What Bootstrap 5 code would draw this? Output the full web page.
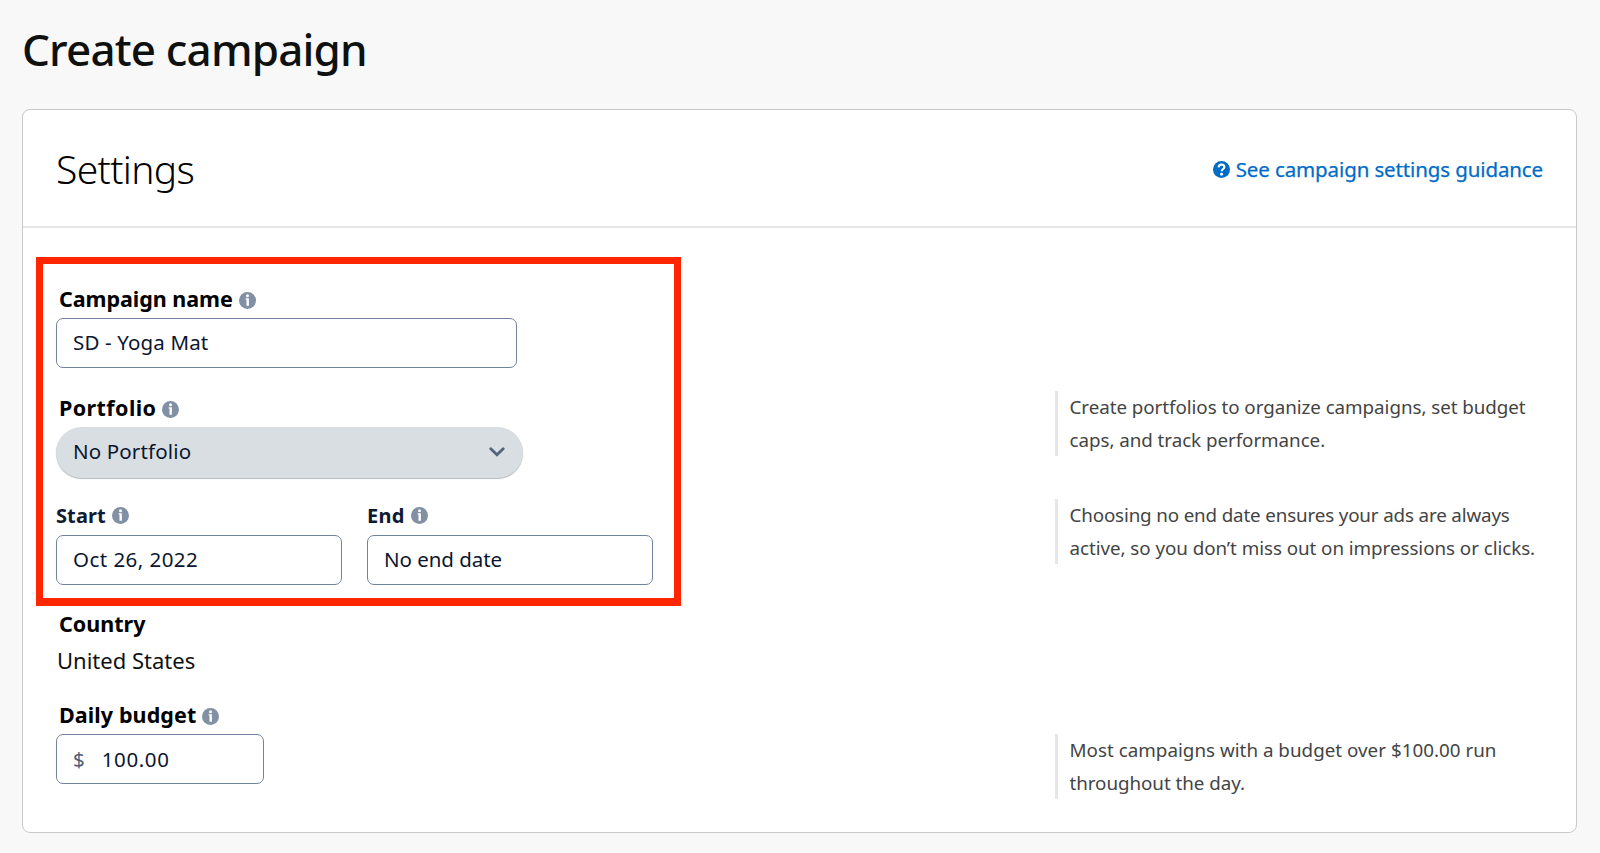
<!DOCTYPE html>
<html lang="en">
<head>
<meta charset="utf-8">
<meta name="viewport" content="width=device-width, initial-scale=1">
<title>Create campaign</title>
<link href="https://cdn.jsdelivr.net/npm/bootstrap@5.3.0/dist/css/bootstrap.min.css" rel="stylesheet">
<style>
body{font-family:"Noto Sans","Open Sans",sans-serif;background:#f8f8f8;color:#0f1111;height:853px;overflow:hidden}
.page{padding:0 23px 0 22px}
.page-title{font-size:44px;font-weight:500;line-height:60px;padding-top:19px;height:109px;letter-spacing:-.83px}
.panel{height:724px;border:1.4px solid #c8cacb;border-radius:8px}
.panel-head{height:118px;border-bottom:2px solid #e6e6e6;padding:0 33px}
.panel-title{font-size:39px;font-weight:300;line-height:60px;padding-top:1px;color:#000;letter-spacing:-.65px}
.guide{font-size:20.5px;font-weight:400;line-height:30px;padding-top:2px;color:#006cc8;gap:6px;letter-spacing:-.12px;-webkit-text-stroke:.25px #006cc8}
.fields{width:660px}
.frame{border:7px solid #ff2600;border-bottom-width:8px;width:645px;height:349px;margin:29px 0 0 13px;padding:17px 13px 0}
.below{padding-left:33px}
.lbl{gap:6px;font-size:21.5px;font-weight:700;line-height:34px;height:34px;margin-bottom:3px;padding:1px 0 0 3px;color:#000;white-space:nowrap}
.lbl svg{margin-top:3px}
.lbl.date{font-size:20px;color:#0f1a33;padding-left:0}
.lbl.date svg{margin-top:-1px}
.form-control.box,.box-group{height:50px;border:1.4px solid #72839c;border-radius:7px;padding:0 0 2px 16px;font-size:20.5px;line-height:46px;color:#0b1630;background:#fff}
.box-group{padding-bottom:0}
.box-group .form-control{font-size:20.5px;color:#0b1630;line-height:46px}
.pill{width:467px;height:51px;border-radius:26px;background:#d9dee2;box-shadow:0 1px 1px #b4babf;font-size:20.5px;color:#0b1630;padding:0 18px 2px 17px;border:0;letter-spacing:.15px}
.country{font-size:22px;line-height:34px;height:34px;padding-left:1px}
.hint{border-left:3px solid #e6e6e6;padding-left:11.5px;font-size:18.8px;line-height:32.5px;height:65px;color:#434444;white-space:nowrap;letter-spacing:-.05px}
.hints{margin-left:372px}
</style>
</head>
<body>
<svg class="d-none">
  <symbol id="info" viewBox="0 0 17 17"><circle cx="8.5" cy="8.5" r="8.5" fill="#8290a6"/><circle cx="8.500" cy="3.700" r="1.500" fill="#fff"/><path d="M6.600 6.300h3.300v7.400H7.500V7.500h-.900z" fill="#fff"/></symbol>
</svg>
<main class="page">
  <h1 class="page-title mb-0">Create campaign</h1>
  <section class="card panel">
    <header class="panel-head d-flex align-items-center justify-content-between">
      <h2 class="panel-title mb-0">Settings</h2>
      <a href="#" class="guide d-flex align-items-center text-decoration-none">
        <svg width="17" height="17" viewBox="0 0 17 17"><circle cx="8.5" cy="8.5" r="8.5" fill="#006cc8"/><path d="M5.6 6.4C5.7 4.3 7 3.6 8.5 3.6c1.700 0 2.900 1 2.900 2.500 0 2-2.700 1.900-2.700 4.200" fill="none" stroke="#fff" stroke-width="2.100"/><circle cx="8.600" cy="13.200" r="1.450" fill="#fff"/></svg>
        <span>See campaign settings guidance</span>
      </a>
    </header>
    <div class="d-flex">
      <form class="fields flex-shrink-0">
        <div class="frame">
          <label class="lbl d-flex align-items-center"><span style="letter-spacing:-.05px">Campaign name</span><svg width="17" height="17"><use href="#info"/></svg></label>
          <input class="form-control box" style="width:461px;letter-spacing:.15px" value="SD - Yoga Mat">
          <label class="lbl d-flex align-items-center" style="margin-top:22px"><span style="letter-spacing:.4px">Portfolio</span><svg width="17" height="17"><use href="#info"/></svg></label>
          <button type="button" class="btn pill d-flex align-items-center justify-content-between"><span>No Portfolio</span><svg width="16" height="10" viewBox="0 0 16 10"><path d="M1.800 1.800 8 7.800l6.200-6" fill="none" stroke="#54647f" stroke-width="2.800" stroke-linecap="round"/></svg></button>
          <div class="d-flex" style="gap:25px;margin-top:20px">
            <div>
              <label class="lbl date d-flex align-items-center"><span style="letter-spacing:.1px">Start</span><svg width="17" height="17"><use href="#info"/></svg></label>
              <input class="form-control box" style="width:286px;letter-spacing:.45px" value="Oct 26, 2022">
            </div>
            <div>
              <label class="lbl date d-flex align-items-center"><span style="letter-spacing:.3px">End</span><svg width="17" height="17"><use href="#info"/></svg></label>
              <input class="form-control box" style="width:286px;letter-spacing:-.05px" value="No end date">
            </div>
          </div>
        </div>
        <div class="below">
          <div class="lbl">Country</div>
          <div class="country">United States</div>
          <label class="lbl d-flex align-items-center" style="margin-top:20px"><span style="letter-spacing:.1px">Daily budget</span><svg width="17" height="17"><use href="#info"/></svg></label>
          <div class="box-group d-flex align-items-center" style="width:208px"><span style="color:#4d5d78">$</span><input class="form-control border-0 p-0 bg-transparent" style="margin-left:17px;letter-spacing:.6px;width:150px" value="100.00"></div>
        </div>
      </form>
      <aside class="hints">
        <div class="hint" style="margin-top:163px">Create portfolios to organize campaigns, set budget<br>caps, and track performance.</div>
        <div class="hint" style="margin-top:43px"><span style="letter-spacing:-.15px">Choosing no end date ensures your ads are always</span><br>active, so you don’t miss out on impressions or clicks.</div>
        <div class="hint" style="margin-top:170px"><span style="letter-spacing:.02px">Most campaigns with a budget over $100.00 run</span><br>throughout the day.</div>
      </aside>
    </div>
  </section>
</main>
<script src="https://cdn.jsdelivr.net/npm/bootstrap@5.3.0/dist/js/bootstrap.bundle.min.js"></script>
</body>
</html>
